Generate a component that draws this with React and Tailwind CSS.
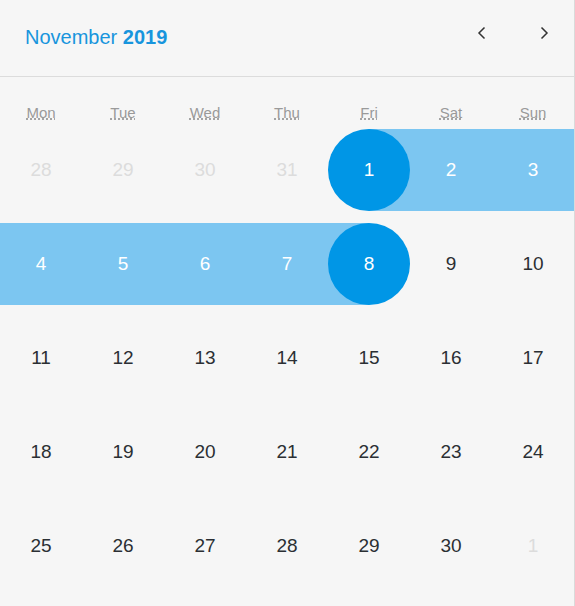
import React from "react";

const weeks = [
  [["28", "out"], ["29", "out"], ["30", "out"], ["31", "out"], ["1", "start"], ["2", "mid"], ["3", "mid"]],
  [["4", "mid"], ["5", "mid"], ["6", "mid"], ["7", "mid"], ["8", "end"], ["9", ""], ["10", ""]],
  [["11", ""], ["12", ""], ["13", ""], ["14", ""], ["15", ""], ["16", ""], ["17", ""]],
  [["18", ""], ["19", ""], ["20", ""], ["21", ""], ["22", ""], ["23", ""], ["24", ""]],
  [["25", ""], ["26", ""], ["27", ""], ["28", ""], ["29", ""], ["30", ""], ["1", "out"]],
];

const days = ["Mon", "Tue", "Wed", "Thu", "Fri", "Sat", "Sun"];

function Cell({ label, kind }) {
  let band = "";
  if (kind === "mid") band = "bg-[#7cc6f1]";
  if (kind === "start") band = "bg-[linear-gradient(to_right,transparent_50%,#7cc6f1_50%)]";
  if (kind === "end") band = "bg-[linear-gradient(to_right,#7cc6f1_50%,transparent_50%)]";
  const isCircle = kind === "start" || kind === "end";
  let color = "text-[#2b2f33]";
  if (kind === "out") color = "text-[#dcdcdc]";
  if (kind === "mid" || isCircle) color = "text-white";
  return (
    <div className="h-[94px] flex items-center">
      <div className={`h-[82px] w-full flex items-center justify-center ${band}`}>
        {isCircle ? (
          <div className="h-[82px] w-[82px] rounded-full bg-[#0096e6] flex items-center justify-center text-white text-[19px]">
            {label}
          </div>
        ) : (
          <span className={`text-[19px] ${color}`}>{label}</span>
        )}
      </div>
    </div>
  );
}

export default function App() {
  return (
    <div className="w-[575px] h-[606px] bg-[#f6f6f6] border-r border-[#dadada] font-['Liberation_Sans'] overflow-hidden">
      <div className="w-[574px]">
        <div className="h-[77px] border-b border-[#dcdcdc] flex items-start justify-between">
          <div className="pl-[25px] pt-[25px] text-[20px] text-[#1895dd] leading-[24px]">
            November <span className="font-bold">2019</span>
          </div>
          <div className="flex pt-[26px] pr-[25px] gap-[52px]">
            <svg width="10" height="14" viewBox="0 0 10 14" fill="none" stroke="#333" strokeWidth="1.5">
              <path d="M7.5 1.5 L2 7 L7.5 12.5" />
            </svg>
            <svg width="10" height="14" viewBox="0 0 10 14" fill="none" stroke="#333" strokeWidth="1.5">
              <path d="M2.5 1.5 L8 7 L2.5 12.5" />
            </svg>
          </div>
        </div>
        <div className="grid grid-cols-7 h-[46px] pt-[27px]">
          {days.map((d) => (
            <div key={d} className="flex justify-center">
              <abbr title={d} className="text-[15px] leading-[18px] text-[#9a9a9a] underline decoration-dotted decoration-[#888] underline-offset-[1px]">
                {d}
              </abbr>
            </div>
          ))}
        </div>
        <div className="grid grid-cols-7">
          {weeks.flat().map(([l, k], i) => (
            <Cell key={i} label={l} kind={k} />
          ))}
        </div>
      </div>
    </div>
  );
}
